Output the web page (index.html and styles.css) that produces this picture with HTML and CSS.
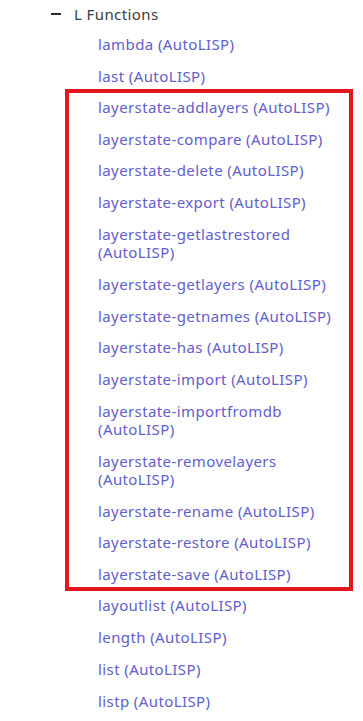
FILE: index.html
```html
<!DOCTYPE html>
<html>
<head>
<meta charset="utf-8">
<link rel="stylesheet" href="styles.css">
</head>
<body>
<div class="tree">
  <div class="head">
    <span class="dash"></span>
    <span class="head-label">L Functions</span>
  </div>
  <ul class="items">
    <li><a href="#">lambda (AutoLISP)</a></li>
    <li><a href="#">last (AutoLISP)</a></li>
  </ul>
  <ul class="items boxed">
    <li><a href="#">layerstate-addlayers (AutoLISP)</a></li>
    <li><a href="#">layerstate-compare (AutoLISP)</a></li>
    <li><a href="#">layerstate-delete (AutoLISP)</a></li>
    <li><a href="#">layerstate-export (AutoLISP)</a></li>
    <li><a href="#">layerstate-getlastrestored<br>(AutoLISP)</a></li>
    <li><a href="#">layerstate-getlayers (AutoLISP)</a></li>
    <li><a href="#">layerstate-getnames (AutoLISP)</a></li>
    <li><a href="#">layerstate-has (AutoLISP)</a></li>
    <li><a href="#">layerstate-import (AutoLISP)</a></li>
    <li><a href="#">layerstate-importfromdb<br>(AutoLISP)</a></li>
    <li><a href="#">layerstate-removelayers<br>(AutoLISP)</a></li>
    <li><a href="#">layerstate-rename (AutoLISP)</a></li>
    <li><a href="#">layerstate-restore (AutoLISP)</a></li>
    <li><a href="#">layerstate-save (AutoLISP)</a></li>
  </ul>
  <ul class="items">
    <li><a href="#">layoutlist (AutoLISP)</a></li>
    <li><a href="#">length (AutoLISP)</a></li>
    <li><a href="#">list (AutoLISP)</a></li>
    <li><a href="#">listp (AutoLISP)</a></li>
  </ul>
</div>
</body>
</html>
```
FILE: styles.css
```css
html, body {
  margin: 0;
  padding: 0;
  background: #ffffff;
}
body {
  font-family: "Noto Sans", "Open Sans", sans-serif;
  font-size: 15px;
  line-height: 18px;
  letter-spacing: 0.4px;
}
.tree {
  padding-top: 5px;
  display: flex;
  flex-direction: column;
}
.head {
  display: flex;
  align-items: center;
  margin-left: 51px;
  gap: 13px;
  color: #3c3c3c;
}
.dash {
  width: 10px;
  height: 2px;
  background: #2a2a2a;
}
.items {
  list-style: none;
  margin: 0;
  padding: 0 0 0 98px;
  display: flex;
  flex-direction: column;
  gap: 13.8px;
}
.items:nth-of-type(1) {
  margin-top: 12px;
}
.items a {
  color: #5f60c9;
  text-decoration: none;
}
.boxed {
  margin: 4px 0 0 65px;
  width: 288px;
  box-sizing: border-box;
  border: 4px solid #e2171f;
  padding: 5px 0 4px 29px;
}
.boxed + .items {
  margin-top: 5px;
}
```
